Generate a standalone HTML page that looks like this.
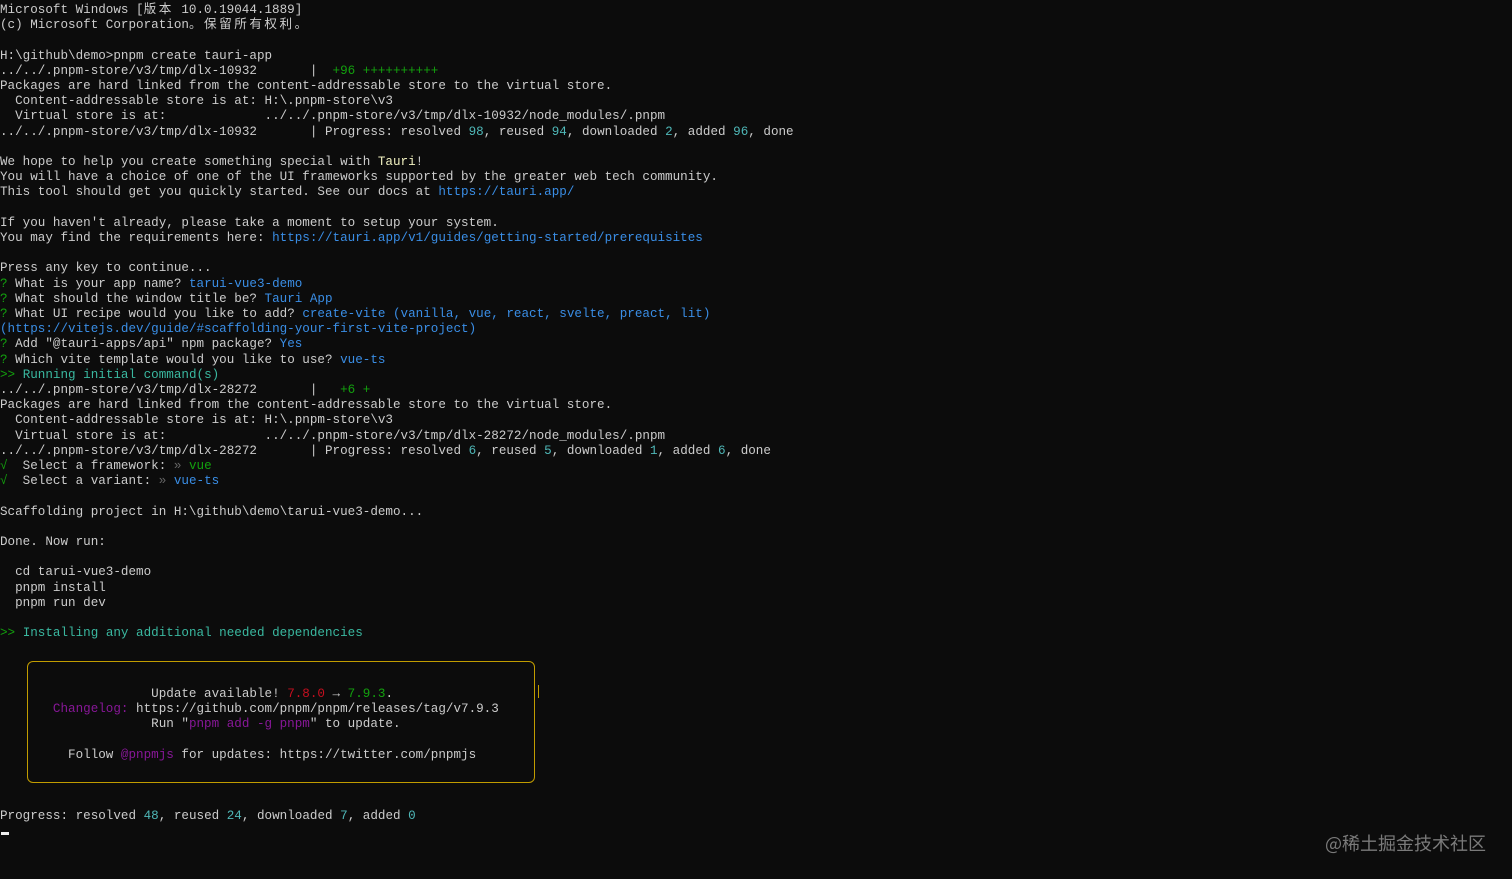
<!DOCTYPE html>
<html><head><meta charset="utf-8"><style>
html,body{margin:0;padding:0;background:#0c0c0c;width:1512px;height:879px;overflow:hidden}
pre{position:absolute;left:0;top:2.9px;margin:0;font-family:"Liberation Mono","Noto Sans CJK SC",monospace;font-size:12.6px;line-height:15.2px;color:#cccccc;white-space:pre}
.c{letter-spacing:2.5px}
.g{color:#13a10e}.b{color:#3a8ee6}.t{color:#4fb8b8}.r{color:#c50f1f}.m{color:#881798}.tl{color:#3ab8a0}
.box{position:absolute;left:27px;top:661px;width:506px;height:120px;border:1px solid #c19c00;border-radius:6px}
.tick{position:absolute;left:538px;top:685px;width:1px;height:13px;background:#c19c00}
.wm{position:absolute;left:1325px;top:830px;font-family:"Noto Sans CJK SC",sans-serif;font-size:18px;color:#7a7a7a}
.cur{position:absolute;left:1px;top:832px;width:8px;height:3px;background:#eee}
</style></head><body>
<div class="box"></div><div class="tick"></div>
<pre>Microsoft Windows [<span class="c">版本</span> 10.0.19044.1889]
(c) Microsoft Corporation<span class="c">。保留所有权利。</span>

H:\github\demo&gt;pnpm create tauri-app
../../.pnpm-store/v3/tmp/dlx-10932       |  <span class="g">+96 ++++++++++</span>
Packages are hard linked from the content-addressable store to the virtual store.
  Content-addressable store is at: H:\.pnpm-store\v3
  Virtual store is at:             ../../.pnpm-store/v3/tmp/dlx-10932/node_modules/.pnpm
../../.pnpm-store/v3/tmp/dlx-10932       | Progress: resolved <span class="t">98</span>, reused <span class="t">94</span>, downloaded <span class="t">2</span>, added <span class="t">96</span>, done

We hope to help you create something special with <span style="color:#f1f1c0">Tauri</span>!
You will have a choice of one of the UI frameworks supported by the greater web tech community.
This tool should get you quickly started. See our docs at <span class="b">https://tauri.app/</span>

If you haven't already, please take a moment to setup your system.
You may find the requirements here: <span class="b">https://tauri.app/v1/guides/getting-started/prerequisites</span>

Press any key to continue...
<span class="g">?</span> What is your app name? <span class="b">tarui-vue3-demo</span>
<span class="g">?</span> What should the window title be? <span class="b">Tauri App</span>
<span class="g">?</span> What UI recipe would you like to add? <span class="b">create-vite (vanilla, vue, react, svelte, preact, lit)</span>
<span class="b">(https://vitejs.dev/guide/#scaffolding-your-first-vite-project)</span>
<span class="g">?</span> Add "@tauri-apps/api" npm package? <span class="b">Yes</span>
<span class="g">?</span> Which vite template would you like to use? <span class="b">vue-ts</span>
<span class="g">&gt;&gt;</span> <span class="tl">Running initial command(s)</span>
../../.pnpm-store/v3/tmp/dlx-28272       |   <span class="g">+6 +</span>
Packages are hard linked from the content-addressable store to the virtual store.
  Content-addressable store is at: H:\.pnpm-store\v3
  Virtual store is at:             ../../.pnpm-store/v3/tmp/dlx-28272/node_modules/.pnpm
../../.pnpm-store/v3/tmp/dlx-28272       | Progress: resolved <span class="t">6</span>, reused <span class="t">5</span>, downloaded <span class="t">1</span>, added <span class="t">6</span>, done
<span class="g">√</span>  Select a framework: <span style="color:#666">»</span> <span class="g">vue</span>
<span class="g">√</span>  Select a variant: <span style="color:#666">»</span> <span class="b">vue-ts</span>

Scaffolding project in H:\github\demo\tarui-vue3-demo...

Done. Now run:

  cd tarui-vue3-demo
  pnpm install
  pnpm run dev

<span class="g">&gt;&gt;</span> <span class="tl">Installing any additional needed dependencies</span>



                    Update available! <span class="r">7.8.0</span> → <span class="g">7.9.3</span>.
       <span class="m">Changelog:</span> https://github.com/pnpm/pnpm/releases/tag/v7.9.3
                    Run "<span class="m">pnpm add -g pnpm</span>" to update.

         Follow <span class="m">@pnpmjs</span> for updates: https://twitter.com/pnpmjs



Progress: resolved <span class="t">48</span>, reused <span class="t">24</span>, downloaded <span class="t">7</span>, added <span class="t">0</span></pre>
<div class="cur"></div>
<div class="wm">@稀土掘金技术社区</div>
</body></html>
